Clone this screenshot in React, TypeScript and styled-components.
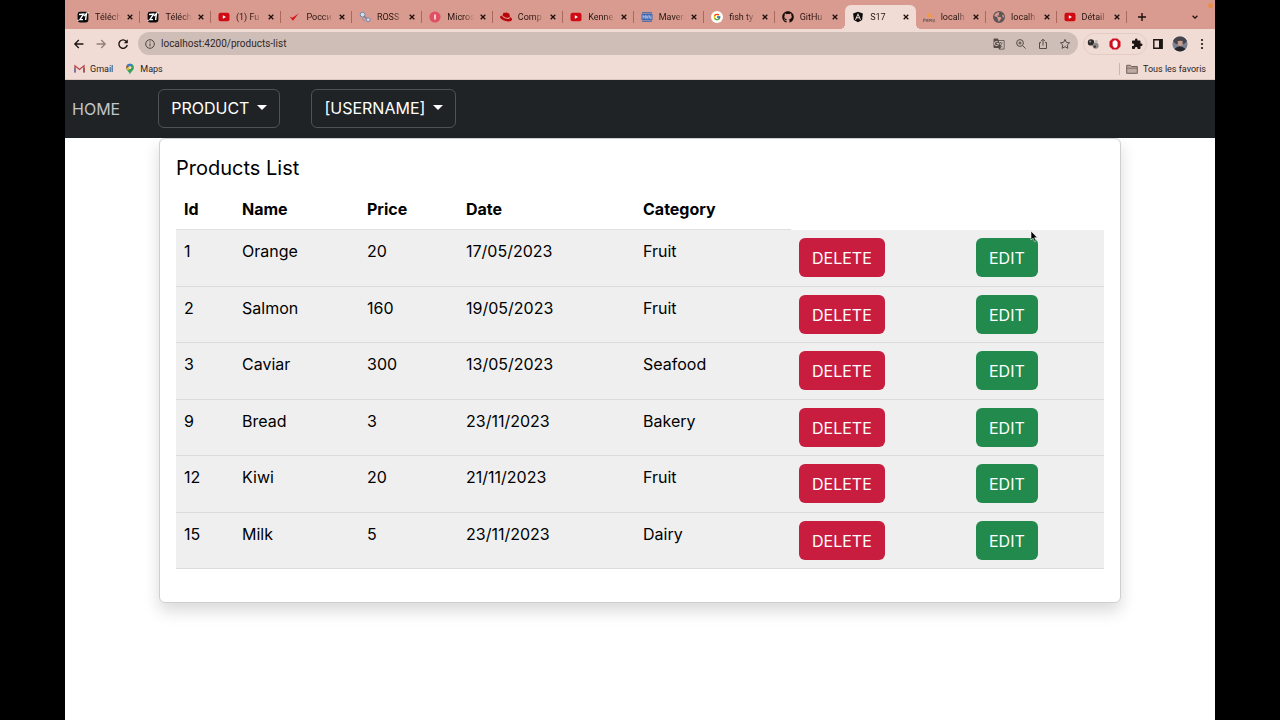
import React from "react";
import styled, { createGlobalStyle, css } from "styled-components";
import { FcGoogle } from "react-icons/fc";
import { FaGithub, FaRedhat, FaAngular } from "react-icons/fa";
import { FaEarthAmericas } from "react-icons/fa6";
import { MdExtension, MdGTranslate } from "react-icons/md";

const GlobalStyle = createGlobalStyle`
  *, *::before, *::after { box-sizing: border-box; }
  body {
    margin: 0;
    background: #000;
    color: #000;
    font-family: Inter, "Liberation Sans", sans-serif;
    font-size: 16px;
  }
  button, input { font: inherit; color: inherit; }
  svg { display: block; flex: none; }
`;

const Screen = styled.div`
  position: relative;
  display: flex;
  flex-direction: column;
  min-height: 100vh;
  margin: 0 65px;
  background: #fff;
`;

/* Browser chrome */

const BrowserChrome = styled.div`
  font-family: Roboto, "Liberation Sans", sans-serif;
  font-size: 9px;
  line-height: 12px;
`;

const TabStrip = styled.div`
  position: relative;
  display: flex;
  align-items: flex-end;
  height: 29px;
  padding-left: 5px;
  background: #d99b8f;
`;

const TabItem = styled.div<{ $active?: boolean; $bar?: boolean }>`
  position: relative;
  display: flex;
  flex: 1;
  align-items: center;
  min-width: 0;
  height: 24px;
  padding: 0 4px 0 7px;
  border-radius: 6px 6px 0 0;
  ${(p) =>
    p.$active &&
    css`
      background: #f1dcd5;
      &::before,
      &::after {
        content: "";
        position: absolute;
        bottom: 0;
        width: 5px;
        height: 5px;
      }
      &::before {
        right: 100%;
        background: radial-gradient(circle at 0 0, transparent 5px, #f1dcd5 5px);
      }
      &::after {
        left: 100%;
        background: radial-gradient(circle at 100% 0, transparent 5px, #f1dcd5 5px);
      }
    `}
  ${(p) =>
    p.$bar &&
    css`
      &::after {
        content: "";
        position: absolute;
        right: 0;
        top: 6px;
        width: 1px;
        height: 12px;
        background: #a8685d;
      }
    `}
`;

const TabButton = styled.button`
  display: flex;
  flex: 1;
  align-items: center;
  gap: 6px;
  min-width: 0;
  padding: 0;
  border: 0;
  background: none;
  color: #2a1512;
`;

const TabLabel = styled.span`
  flex: 1;
  text-align: left;
  white-space: nowrap;
  mask-image: linear-gradient(to right, #000 60%, transparent 96%);
`;

const IconButton = styled.button`
  display: flex;
  align-items: center;
  justify-content: center;
  padding: 0;
  border: 0;
  background: none;
`;

const CloseButton = styled(IconButton)`
  width: 12px;
  height: 12px;
  margin-left: 2px;
`;

const StripEnd = styled.div`
  display: flex;
  align-items: center;
  justify-content: space-between;
  width: 88px;
  height: 24px;
  padding: 0 16px 0 10px;
`;

const RecordingDot = styled.span`
  position: absolute;
  top: 3px;
  right: 2px;
  width: 5px;
  height: 5px;
  border-radius: 50%;
  background: #ea8f4c;
`;

const Toolbar = styled.div`
  display: flex;
  align-items: center;
  height: 29px;
  padding: 0 8px;
  background: #f1dcd5;
`;

const NavButtons = styled.div`
  display: flex;
  gap: 10px;
  margin-right: 9px;
`;

const AddressBar = styled.label`
  display: flex;
  flex: 1;
  align-items: center;
  gap: 6px;
  height: 23px;
  padding: 0 7px;
  border-radius: 12px;
  background: #cfbeb7;
`;

const AddressInput = styled.input`
  flex: 1;
  min-width: 0;
  padding: 0;
  border: 0;
  outline: 0;
  background: none;
  font-size: 10px;
  line-height: 14px;
  color: #2f2725;
`;

const AddressTools = styled.div`
  display: flex;
  gap: 10px;
`;

const Extensions = styled.div`
  display: flex;
  align-items: center;
  gap: 10px;
  height: 22px;
  margin-left: 5px;
  padding: 0 3px;
  border: 1px solid #e3ccc5;
  border-radius: 11px;
`;

const ToolbarEnd = styled.div`
  display: flex;
  align-items: center;
  gap: 9px;
  margin-left: 6px;
`;

const BookmarkBar = styled.nav`
  display: flex;
  align-items: center;
  gap: 12px;
  height: 22px;
  padding: 0 9px;
  border-bottom: 1px solid #dcc5bd;
  background: #f1dcd5;
`;

const Bookmark = styled.a`
  display: flex;
  align-items: center;
  gap: 5px;
  color: #2a1c19;
  text-decoration: none;
`;

const AllBookmarks = styled(Bookmark)`
  margin-left: auto;
  padding-left: 6px;
  border-left: 1px solid #cdb3ab;
`;

/* Web page */

const Navbar = styled.header`
  display: flex;
  align-items: center;
  height: 58px;
  padding: 0 7px 2px;
  gap: 31px;
  background: #1f2326;
`;

const HomeLink = styled.a`
  margin-right: 7px;
  padding-top: 2px;
  line-height: 26px;
  color: #c3c5c6;
  text-decoration: none;
`;

const DropdownButton = styled.button`
  display: flex;
  align-items: center;
  gap: 8px;
  height: 39px;
  padding: 0 12px;
  border: 1px solid #4c5357;
  border-radius: 6px;
  background: none;
  color: #fff;
`;

const Caret = styled.span`
  margin-bottom: 1px;
  border: 5px solid transparent;
  border-top-color: #fff;
  border-bottom: 0;
`;

const Card = styled.main`
  margin: 0 94px;
  padding: 16px 16px 33px;
  border: 1px solid #cfcfcf;
  border-radius: 6px;
  background: #fff;
  box-shadow: 0 8px 16px rgba(0, 0, 0, 0.15);
`;

const CardTitle = styled.h1`
  margin: 0 0 12px;
  font-size: 20px;
  font-weight: 400;
  line-height: 26px;
`;

const ProductTable = styled.table`
  width: 100%;
  table-layout: fixed;
  border-spacing: 0;
`;

const HeadCell = styled.th<{ $width?: number }>`
  width: ${(p) => (p.$width ? `${p.$width}px` : "auto")};
  height: 37px;
  padding: 0 8px 5px;
  border-bottom: 1px solid #dfe0e1;
  font-weight: 700;
  line-height: 26px;
  text-align: left;
`;

const ActionHead = styled.td<{ $width?: number }>`
  width: ${(p) => (p.$width ? `${p.$width}px` : "auto")};
  padding: 0;
`;

const Row = styled.tr`
  height: 56px;
  background: #efefef;
  &:nth-child(odd) {
    height: 57px;
  }
`;

const Cell = styled.td`
  padding: 8px 8px 0;
  border-bottom: 1px solid #d9dbdc;
  line-height: 26px;
  vertical-align: top;
`;

const ActionButton = styled.button<{ $tone: "danger" | "success" }>`
  display: block;
  height: 39px;
  padding: 0 13px;
  border: 0;
  border-radius: 6px;
  background: ${(p) => (p.$tone === "danger" ? "#c81d3e" : "#218a4c")};
  color: #fff;
`;

const Pointer = styled.svg`
  position: absolute;
  left: 965px;
  top: 230px;
`;

/* Icons */

const YouTubeIcon = () => (
  <svg width="12" height="12" viewBox="0 0 12 12">
    <rect x="0.5" y="1.8" width="11" height="8.4" rx="2" fill="#cf0a14" />
    <path d="M4.8 4.2v3.6L8 6z" fill="#fff" />
  </svg>
);

const ArchiveIcon = () => (
  <svg width="12" height="12" viewBox="0 0 12 12">
    <rect x="0.6" y="0.8" width="10.8" height="10.6" rx="2.4" fill="#0d0d0d" />
    <path d="M2 3.5 6.5 3 3 8.6h3M7 5l2.4-2.4L8.6 9" stroke="#fff" strokeWidth="1.4" fill="none" />
    <path d="M0 9.3h2M10 1.8h2" stroke="#fff" strokeWidth="0.8" />
  </svg>
);

const CheckIcon = () => (
  <svg width="12" height="12" viewBox="0 0 12 12">
    <path d="M1.6 5.4 4.4 6.8 10.6 2.4 5 9.8z" fill="#d8131b" />
  </svg>
);

const ChainIcon = () => (
  <svg width="12" height="12" viewBox="0 0 12 12" fill="none">
    <circle cx="3.6" cy="3.6" r="2.4" stroke="#7485a6" fill="#d5dcec" />
    <path d="m5.2 5.4 2.4 2.2" stroke="#7485a6" strokeWidth="1.6" />
    <circle cx="9.2" cy="8.7" r="1.9" stroke="#7485a6" fill="#d5dcec" />
    <path d="M2.6 7.2 6 10.4" stroke="#8593ad" />
  </svg>
);

const PinkBadgeIcon = () => (
  <svg width="12" height="12" viewBox="0 0 12 12">
    <circle cx="6" cy="6" r="5.6" fill="#df5065" />
    <path d="M5 3.4h2v5H5z" fill="#f6c9cd" />
  </svg>
);

const MavenIcon = () => (
  <svg width="12" height="12" viewBox="0 0 12 12">
    <path d="M1 1h10v1.4H1zM1 9.6h10V11H1z" fill="#5471a8" />
    <path d="M0.5 3h11v6h-11z" fill="#3f67b4" />
    <path d="M2 7.8V4.4l1.2 2 1.2-2v3.4M5.3 4.4 6.1 7.6 7 4.4M8 7.8V4.4l2 3.4V4.4" stroke="#c5d3ee" strokeWidth="0.7" fill="none" />
  </svg>
);

const GoogleIcon = () => (
  <svg width="12" height="12" viewBox="0 0 12 12">
    <circle cx="6" cy="6" r="6" fill="#fff" />
    <FcGoogle x="2" y="2" width="8" height="8" size={8} />
  </svg>
);

const SailIcon = () => (
  <svg width="12" height="12" viewBox="0 0 12 12">
    <path d="M4 6.2 5.8 1.2 6.4 6.2zM6.8 6.2 7.4 2.2 10.4 6.2z" fill="#ee9a4c" />
    <path d="M0.5 11.2V8h1.6v1.4H.5M3.4 11V8M3.4 9.4h1.4V8v3M6 11l.6-3 .8 2 .8-2 .4 3M10 8v2.8h1.4V8" stroke="#6d5a58" strokeWidth="0.7" fill="none" />
  </svg>
);

const CloseIcon = () => (
  <svg width="6" height="6" viewBox="0 0 6 6">
    <path d="M0.7 0.7 5.3 5.3M5.3 0.7 0.7 5.3" stroke="#1d0f0d" strokeWidth="1.3" />
  </svg>
);

const PlusIcon = () => (
  <svg width="10" height="10" viewBox="0 0 10 10">
    <path d="M5 1v8M1 5h8" stroke="#1d0f0d" strokeWidth="1.4" />
  </svg>
);

const ChevronIcon = () => (
  <svg width="8" height="8" viewBox="0 0 8 8">
    <path d="m1.6 2.8 2.4 2.4 2.4-2.4" stroke="#1d0f0d" strokeWidth="1.3" fill="none" />
  </svg>
);

const ArrowIcon = ({ forward }: { forward?: boolean }) => (
  <svg width="12" height="12" viewBox="0 0 12 12" fill="none">
    <path
      d={forward ? "M1.6 6h8.6M6.2 2l4 4-4 4" : "M10.4 6H1.8M5.8 2l-4 4 4 4"}
      stroke={forward ? "#917e79" : "#1d1513"}
      strokeWidth="1.3"
    />
  </svg>
);

const ReloadIcon = () => (
  <svg width="12" height="12" viewBox="0 0 12 12" fill="none">
    <path d="M9.6 3.8A4.2 4.2 0 1 0 10.2 7" stroke="#1d1513" strokeWidth="1.4" />
    <path d="M10.8 1.2v4H6.8z" fill="#1d1513" />
  </svg>
);

const InfoIcon = () => (
  <svg width="10" height="10" viewBox="0 0 10 10" fill="none">
    <circle cx="5" cy="5" r="4.3" stroke="#4d423f" />
    <path d="M5 4.4v3M5 2.4v1.1" stroke="#4d423f" />
  </svg>
);

const ZoomIcon = () => (
  <svg width="12" height="12" viewBox="0 0 12 12" fill="none" stroke="#574b48">
    <circle cx="5" cy="5" r="3.4" />
    <path d="m7.6 7.6 3 3M3.4 5h3.2M5 3.4v3.2" />
  </svg>
);

const ShareIcon = () => (
  <svg width="12" height="12" viewBox="0 0 12 12" fill="none" stroke="#574b48">
    <path d="M4 4.6H2.5v5.9h7V4.6H8M6 7.6V1.4M4 3.2l2-2 2 2" />
  </svg>
);

const StarIcon = () => (
  <svg width="12" height="12" viewBox="0 0 12 12" fill="none" stroke="#574b48">
    <path d="m6 1.4 1.4 3 3.2.4-2.4 2.2.7 3.3L6 8.7l-2.9 1.6.7-3.3-2.4-2.2 3.2-.4z" />
  </svg>
);

const BallsIcon = () => (
  <svg width="12" height="12" viewBox="0 0 12 12">
    <circle cx="4" cy="4.4" r="3.2" fill="#2c2a2a" />
    <circle cx="8.6" cy="7.8" r="3" fill="#8d8886" />
    <circle cx="9.2" cy="3.4" r="1.6" fill="#c3bab7" />
    <circle cx="3.2" cy="3.6" r="1" fill="#9a9391" />
    <circle cx="7.8" cy="8.6" r="1.2" fill="#2f2d2d" />
  </svg>
);

const HandBlockIcon = () => (
  <svg width="12" height="12" viewBox="0 0 12 12">
    <path d="M3.6.5h4.8l3.1 3.1v4.8l-3.1 3.1H3.6L.5 8.4V3.6z" fill="#d20d1e" />
    <path d="M3.6 5.2V3.4h1V2.6h1.2v-.4h1v.6h1v1h.8V7.4C8.4 9 7.4 9.7 6.2 9.7 4.8 9.7 4.4 9 3.6 7.4z" fill="#fff" />
  </svg>
);

const PanelIcon = () => (
  <svg width="10" height="10" viewBox="0 0 10 10">
    <path d="M0.8 0.8h8.4v8.4H.8z" fill="none" stroke="#1d1513" strokeWidth="1.4" />
    <path d="M6 1h3v8H6z" fill="#1d1513" />
  </svg>
);

const AvatarIcon = () => (
  <svg width="16" height="16" viewBox="0 0 16 16">
    <circle cx="8" cy="8" r="7.6" fill="#7b8290" />
    <path d="M1 5.2A7.6 7.6 0 0 1 15 5.2L12 8 4 8z" fill="#45454e" />
    <path d="M5.6 5.2Q8 2 10.6 5v3.6Q8.2 11.6 6 8.8z" fill="#c59d90" />
    <path d="M5.4 5.4Q8 1 10.8 5.2 8 3.8 5.4 5.4M2.4 13Q7.6 7.6 13.6 13A7.6 7.6 0 0 1 2.4 13" fill="#26252c" />
  </svg>
);

const MoreIcon = () => (
  <svg width="10" height="12" viewBox="0 0 10 12" fill="#1d1513">
    <circle cx="5" cy="2" r="1.1" />
    <circle cx="5" cy="6" r="1.1" />
    <circle cx="5" cy="10" r="1.1" />
  </svg>
);

const GmailIcon = () => (
  <svg width="11" height="10" viewBox="0 0 11 10" fill="none" strokeWidth="1.3">
    <path d="M1 8.4V1.8l4.5 3.6L10 1.8v6.6" stroke="#b8434a" />
    <path d="M1 8.6V4" stroke="#5b6fae" />
    <path d="M10 8.6V4" stroke="#8a4a4f" />
  </svg>
);

const MapsIcon = () => (
  <svg width="10" height="12" viewBox="0 0 10 12">
    <path d="M5 .8A3.9 3.9 0 0 0 1.1 4.7C1.1 7.4 4.2 8.4 5 11.6 5.8 8.4 8.9 7.4 8.9 4.7A3.9 3.9 0 0 0 5 .8" fill="#34a35a" />
    <path d="M5 .8A3.9 3.9 0 0 0 2 2.2L4 4l3.2-2.6A3.9 3.9 0 0 0 5 .8" fill="#3b78d8" />
    <path d="M2 2.2a3.9 3.9 0 0 0-.7 3.4L4 4z" fill="#d9483b" />
    <path d="M1.3 5.6c.2.8.7 1.4 1.3 2L6 5.6 4 4z" fill="#edb62e" />
    <circle cx="5" cy="4.6" r="1.4" fill="#f1dcd5" />
  </svg>
);

const FolderIcon = () => (
  <svg width="12" height="10" viewBox="0 0 12 10">
    <path d="M0.7 1.3h3.8l1 1.2h5.8v6.8H.7z" fill="#bfa9a2" stroke="#6f605c" />
    <path d="M1 4.2h10" stroke="#6f605c" strokeWidth="0.8" />
  </svg>
);

const tabs: { label: string; icon: React.ReactNode; active?: boolean }[] = [
  { label: "Téléch", icon: <ArchiveIcon /> },
  { label: "Téléch", icon: <ArchiveIcon /> },
  { label: "(1) Fu", icon: <YouTubeIcon /> },
  { label: "Росси", icon: <CheckIcon /> },
  { label: "ROSS", icon: <ChainIcon /> },
  { label: "Micros", icon: <PinkBadgeIcon /> },
  { label: "Comp", icon: <FaRedhat size={12} color="#b8060c" /> },
  { label: "Kenne", icon: <YouTubeIcon /> },
  { label: "Maven", icon: <MavenIcon /> },
  { label: "fish ty", icon: <GoogleIcon /> },
  { label: "GitHu", icon: <FaGithub size={12} color="#1a0e0c" /> },
  { label: "S17", icon: <FaAngular size={12} color="#0c0c0c" />, active: true },
  { label: "localh", icon: <SailIcon /> },
  { label: "localh", icon: <FaEarthAmericas size={12} color="#5d5557" /> },
  { label: "Détail", icon: <YouTubeIcon /> },
];

const columns = [
  { name: "Id", width: 58 },
  { name: "Name", width: 125 },
  { name: "Price", width: 99 },
  { name: "Date", width: 177 },
  { name: "Category", width: 156 },
];

const products = [
  { id: 1, name: "Orange", price: 20, date: "17/05/2023", category: "Fruit" },
  { id: 2, name: "Salmon", price: 160, date: "19/05/2023", category: "Fruit" },
  { id: 3, name: "Caviar", price: 300, date: "13/05/2023", category: "Seafood" },
  { id: 9, name: "Bread", price: 3, date: "23/11/2023", category: "Bakery" },
  { id: 12, name: "Kiwi", price: 20, date: "21/11/2023", category: "Fruit" },
  { id: 15, name: "Milk", price: 5, date: "23/11/2023", category: "Dairy" },
];

export default function App() {
  return (
    <>
      <GlobalStyle />
      <Screen>
        <BrowserChrome>
          <TabStrip>
            {tabs.map((tab, i) => (
              <TabItem key={i} $active={tab.active} $bar={!tab.active && !tabs[i + 1]?.active}>
                <TabButton>
                  {tab.icon}
                  <TabLabel>{tab.label}</TabLabel>
                </TabButton>
                <CloseButton aria-label="Fermer">
                  <CloseIcon />
                </CloseButton>
              </TabItem>
            ))}
            <StripEnd>
              <IconButton aria-label="Nouvel onglet">
                <PlusIcon />
              </IconButton>
              <IconButton aria-label="Rechercher un onglet">
                <ChevronIcon />
              </IconButton>
            </StripEnd>
            <RecordingDot />
          </TabStrip>

          <Toolbar>
            <NavButtons>
              <IconButton aria-label="Retour"><ArrowIcon /></IconButton>
              <IconButton aria-label="Avancer"><ArrowIcon forward /></IconButton>
              <IconButton aria-label="Actualiser"><ReloadIcon /></IconButton>
            </NavButtons>
            <AddressBar>
              <InfoIcon />
              <AddressInput aria-label="Adresse" defaultValue="localhost:4200/products-list" />
              <AddressTools>
                <IconButton aria-label="Traduire"><MdGTranslate size={12} color="#574b48" /></IconButton>
                <IconButton aria-label="Zoom"><ZoomIcon /></IconButton>
                <IconButton aria-label="Partager"><ShareIcon /></IconButton>
                <IconButton aria-label="Favori"><StarIcon /></IconButton>
              </AddressTools>
            </AddressBar>
            <Extensions>
              <IconButton aria-label="Extension"><BallsIcon /></IconButton>
              <IconButton aria-label="Bloqueur"><HandBlockIcon /></IconButton>
              <IconButton aria-label="Extensions"><MdExtension size={12} color="#1d1513" /></IconButton>
            </Extensions>
            <ToolbarEnd>
              <IconButton aria-label="Panneau"><PanelIcon /></IconButton>
              <IconButton aria-label="Profil"><AvatarIcon /></IconButton>
              <IconButton aria-label="Menu"><MoreIcon /></IconButton>
            </ToolbarEnd>
          </Toolbar>

          <BookmarkBar>
            <Bookmark href="#"><GmailIcon />Gmail</Bookmark>
            <Bookmark href="#"><MapsIcon />Maps</Bookmark>
            <AllBookmarks href="#"><FolderIcon />Tous les favoris</AllBookmarks>
          </BookmarkBar>
        </BrowserChrome>

        <Navbar>
          <HomeLink href="#">HOME</HomeLink>
          <DropdownButton>PRODUCT<Caret /></DropdownButton>
          <DropdownButton>[USERNAME]<Caret /></DropdownButton>
        </Navbar>

        <Card>
          <CardTitle>Products List</CardTitle>
          <ProductTable>
            <thead>
              <tr>
                {columns.map((c) => (
                  <HeadCell key={c.name} $width={c.width} scope="col">{c.name}</HeadCell>
                ))}
                <ActionHead $width={177} />
                <ActionHead />
              </tr>
            </thead>
            <tbody>
              {products.map((p) => (
                <Row key={p.id}>
                  <Cell>{p.id}</Cell>
                  <Cell>{p.name}</Cell>
                  <Cell>{p.price}</Cell>
                  <Cell>{p.date}</Cell>
                  <Cell>{p.category}</Cell>
                  <Cell><ActionButton $tone="danger">DELETE</ActionButton></Cell>
                  <Cell><ActionButton $tone="success">EDIT</ActionButton></Cell>
                </Row>
              ))}
            </tbody>
          </ProductTable>
        </Card>

        <Pointer width="9" height="13" viewBox="0 0 9 13">
          <path d="M1 1v9l2.1-1.8 1.5 3.4 1.5-.7-1.5-3.2h2.8z" fill="#000" stroke="#fff" strokeWidth="0.6" />
        </Pointer>
      </Screen>
    </>
  );
}
